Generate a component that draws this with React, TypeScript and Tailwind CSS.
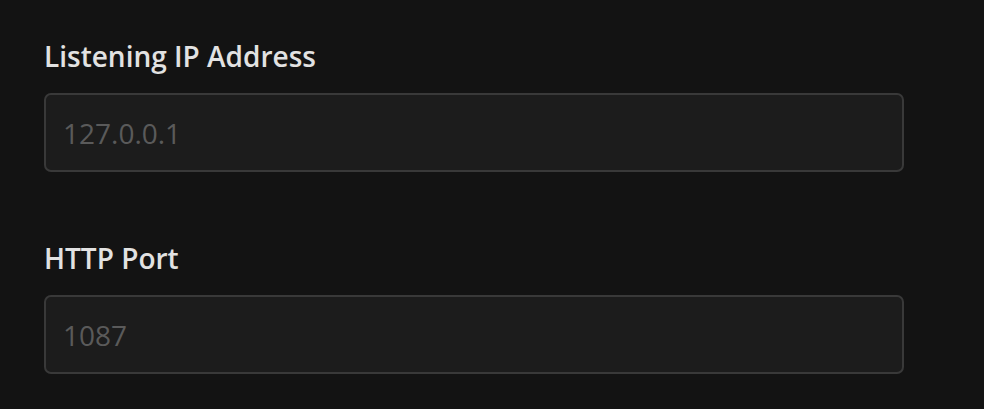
import React from 'react';

// ── Campos do formulário ─────────────────────────────────────────────
const FIELDS = [
  { label: 'Listening IP Address', placeholder: '127.0.0.1' },
  { label: 'HTTP Port', placeholder: '1087' },
];

export default function App() {
  return (
    <div
      className="min-h-[409px] w-full bg-[#131313] pl-[44px] pr-[80px] pt-[37px]"
      style={{ fontFamily: '"Open Sans", "Noto Sans", sans-serif' }}
    >
      <div className="flex w-[860px] flex-col gap-[67px]">
        {FIELDS.map(f => (
          <div key={f.label} className="flex flex-col gap-[18px]">
            <label className="text-[28px] font-semibold leading-[38px] text-[#e2e2e2]">
              {f.label}
            </label>
            <input
              placeholder={f.placeholder}
              className="h-[79px] w-full rounded-[7px] border-2 border-[#393939] bg-[#1c1c1c] px-[17px] text-[28px] text-[#ddd] outline-none placeholder:text-[#5a5a5a]"
            />
          </div>
        ))}
      </div>
    </div>
  );
}
